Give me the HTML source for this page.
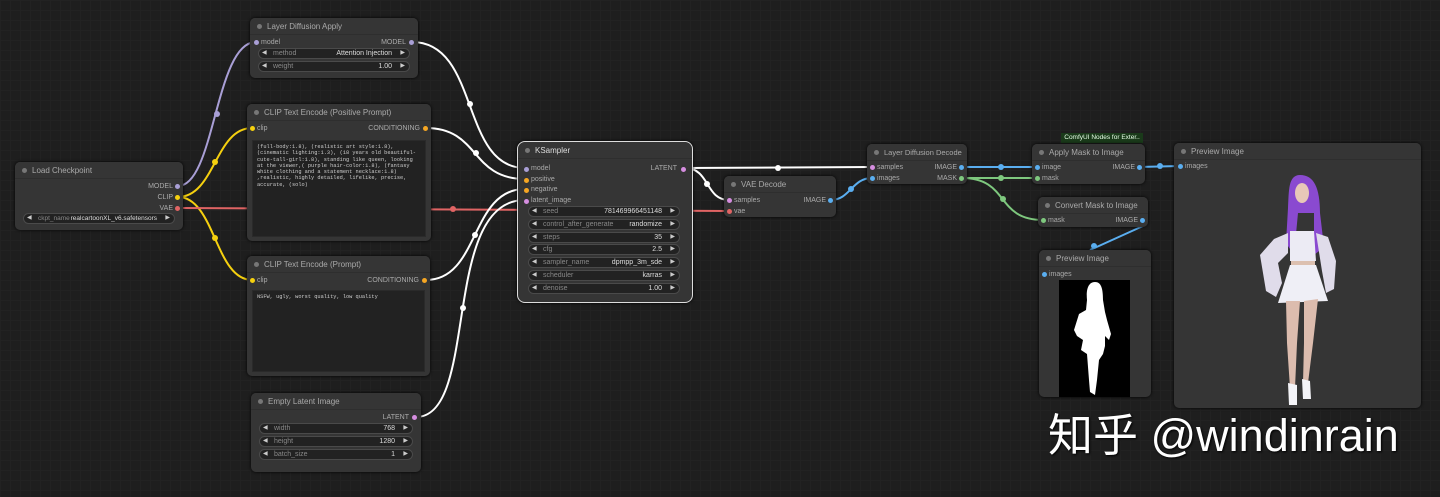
<!DOCTYPE html>
<html><head><meta charset="utf-8"><style>
*{box-sizing:border-box;margin:0;padding:0}
body{width:1440px;height:497px;overflow:hidden;background:#1e1e1e;font-family:"Liberation Sans",Arial,sans-serif;position:relative;
background-image:linear-gradient(#222 1px,transparent 1px),linear-gradient(90deg,#222 1px,transparent 1px);background-size:10px 10px}
.n{position:absolute;background:#353535;border-radius:5px;box-shadow:0 0 3px #000}
.t{position:absolute;left:0;right:0;top:0;height:17px;background:#353535;border-bottom:1px solid #2e2e2e;border-radius:5px 5px 0 0;color:#aaa;font-size:8px;line-height:17px;padding-left:17px}
.t:before{content:"";position:absolute;left:7px;top:6px;width:5px;height:5px;border-radius:50%;background:#777}
.l{position:absolute;font-size:7px;color:#aaa;line-height:9px;white-space:nowrap}
.d{position:absolute;width:5px;height:5px;border-radius:50%}
.w{position:absolute;height:11px;background:#222;border:1px solid #4a4a4a;border-radius:6px;font-size:7px;line-height:9px;color:#888;padding-left:14px;white-space:nowrap;overflow:hidden}
.w:before{content:"◀";position:absolute;left:3px;color:#ccc;font-size:6px}
.w:after{content:"▶";position:absolute;right:4px;color:#ccc;font-size:6px}
.w b{position:absolute;right:17px;top:0;font-weight:normal;color:#ddd}
.ta{position:absolute;background:#222;border:1px solid #2a2a2a;font-family:"Liberation Mono","Noto Sans CJK SC",monospace;font-size:5.3px;line-height:6.3px;color:#ccc;padding:3px 4px}
</style></head><body>
<svg width="1440" height="497" style="position:absolute;left:0;top:0" fill="none" stroke-width="2">
<path d="M178 186 C215 186 215 42 256 42" stroke="#a99fd6"/>
<path d="M178 197 C215 197 215 128 252 128" stroke="#f5d00f"/>
<path d="M178 197 C215 197 215 280 252 280" stroke="#f5d00f"/>
<path d="M178 208 L729 211" stroke="#e06464"/>
<path d="M412 42 C480 42 460 168 525 168" stroke="#fff"/>
<path d="M426 128 C480 128 470 179 525 179" stroke="#fff"/>
<path d="M426 280 C480 280 470 189 525 189" stroke="#fff"/>
<path d="M416 417 C480 417 440 200 525 200" stroke="#fff"/>
<path d="M685 168 C710 168 705 200 729 200" stroke="#fff"/>
<path d="M685 168 L872 167" stroke="#fff"/>
<path d="M831 200 C850 200 852 178 872 178" stroke="#5aaef0"/>
<path d="M962 167 L1038 167" stroke="#5aaef0"/>
<path d="M1140 167 L1180 166" stroke="#5aaef0"/>
<path d="M962 178 L1038 178" stroke="#7ec87e"/>
<path d="M962 178 C1010 178 995 220 1043 220" stroke="#7ec87e"/>
<path d="M1143 226 L1090 250" stroke="#5aaef0"/>
<g stroke="none"><circle cx="217" cy="114" r="3" fill="#a99fd6"/><circle cx="215" cy="162" r="3" fill="#f5d00f"/><circle cx="215" cy="238" r="3" fill="#f5d00f"/><circle cx="453" cy="209" r="3" fill="#e06464"/>
<circle cx="470" cy="104" r="3" fill="#fff"/><circle cx="476" cy="153" r="3" fill="#fff"/><circle cx="475" cy="235" r="3" fill="#fff"/><circle cx="463" cy="308" r="3" fill="#fff"/>
<circle cx="778" cy="168" r="3" fill="#fff"/><circle cx="707" cy="184" r="3" fill="#fff"/><circle cx="851" cy="189" r="3" fill="#5aaef0"/><circle cx="1001" cy="167" r="3" fill="#5aaef0"/><circle cx="1160" cy="166" r="3" fill="#5aaef0"/><circle cx="1001" cy="178" r="3" fill="#7ec87e"/><circle cx="1003" cy="199" r="3" fill="#7ec87e"/><circle cx="1094" cy="246" r="3" fill="#5aaef0"/></g>
</svg>

<div class="n" style="left:250px;top:18px;width:168px;height:60px"><div class="t">Layer Diffusion Apply</div>
<div class="d" style="left:4px;top:22px;background:#a99fd6"></div><div class="l" style="left:11px;top:20px">model</div>
<div class="l" style="right:12px;top:20px">MODEL</div><div class="d" style="right:4px;top:22px;background:#a99fd6"></div>
<div class="w" style="left:8px;right:8px;top:30px">method<b>Attention Injection</b></div>
<div class="w" style="left:8px;right:8px;top:43px">weight<b>1.00</b></div></div>

<div class="n" style="left:247px;top:104px;width:184px;height:137px"><div class="t">CLIP Text Encode (Positive Prompt)</div>
<div class="d" style="left:3px;top:22px;background:#f5d00f"></div><div class="l" style="left:10px;top:20px">clip</div>
<div class="l" style="right:11px;top:20px">CONDITIONING</div><div class="d" style="right:3px;top:22px;background:#f5a623"></div>
<div class="ta" style="left:5px;right:5px;top:36px;height:97px">(full-body:1.8), (realistic art style:1.8), (cinematic lighting:1.3), (18 years old beautiful-cute-tall-girl:1.8), standing like queen, looking at the viewer,( purple hair-color:1.8), (fantasy white clothing and a statement necklace:1.8) ,realistic, highly detailed, lifelike, precise, accurate, (solo)</div></div>

<div class="n" style="left:15px;top:162px;width:168px;height:68px"><div class="t">Load Checkpoint</div>
<div class="l" style="right:10px;top:20px">MODEL</div><div class="d" style="right:3px;top:22px;background:#a99fd6"></div>
<div class="l" style="right:10px;top:31px">CLIP</div><div class="d" style="right:3px;top:33px;background:#f5d00f"></div>
<div class="l" style="right:10px;top:42px">VAE</div><div class="d" style="right:3px;top:44px;background:#e06464"></div>
<div class="w" style="left:8px;right:8px;top:51px;font-size:6.5px">ckpt_name<b>realcartoonXL_v6.safetensors</b></div></div>

<div class="n" style="left:247px;top:256px;width:183px;height:120px"><div class="t">CLIP Text Encode (Prompt)</div>
<div class="d" style="left:3px;top:22px;background:#f5d00f"></div><div class="l" style="left:10px;top:20px">clip</div>
<div class="l" style="right:11px;top:20px">CONDITIONING</div><div class="d" style="right:3px;top:22px;background:#f5a623"></div>
<div class="ta" style="left:5px;right:5px;top:34px;height:82px">NSFW, ugly, worst quality, low quality</div></div>

<div class="n" style="left:251px;top:393px;width:170px;height:79px"><div class="t">Empty Latent Image</div>
<div class="l" style="right:12px;top:20px">LATENT</div><div class="d" style="right:4px;top:22px;background:#d68ee0"></div>
<div class="w" style="left:8px;right:8px;top:30px">width<b>768</b></div>
<div class="w" style="left:8px;right:8px;top:43px">height<b>1280</b></div>
<div class="w" style="left:8px;right:8px;top:56px">batch_size<b>1</b></div></div>

<div class="n" style="left:517px;top:141px;width:176px;height:162px;border:1px solid #ddd;border-radius:8px"><div class="t" style="color:#ddd;border-radius:8px 8px 0 0">KSampler</div>
<div class="d" style="left:6px;top:25px;background:#a99fd6"></div><div class="l" style="left:13px;top:22px">model</div>
<div class="d" style="left:6px;top:36px;background:#f5a623"></div><div class="l" style="left:13px;top:33px">positive</div>
<div class="d" style="left:6px;top:46px;background:#f5a623"></div><div class="l" style="left:13px;top:43px">negative</div>
<div class="d" style="left:6px;top:57px;background:#d68ee0"></div><div class="l" style="left:13px;top:54px">latent_image</div>
<div class="l" style="right:15px;top:22px">LATENT</div><div class="d" style="right:6px;top:25px;background:#d68ee0"></div>
<div class="w" style="left:10px;right:12px;top:64px">seed<b>781469966451148</b></div>
<div class="w" style="left:10px;right:12px;top:77px">control_after_generate<b>randomize</b></div>
<div class="w" style="left:10px;right:12px;top:90px">steps<b>35</b></div>
<div class="w" style="left:10px;right:12px;top:102px">cfg<b>2.5</b></div>
<div class="w" style="left:10px;right:12px;top:115px">sampler_name<b>dpmpp_3m_sde</b></div>
<div class="w" style="left:10px;right:12px;top:128px">scheduler<b>karras</b></div>
<div class="w" style="left:10px;right:12px;top:141px">denoise<b>1.00</b></div></div>

<div class="n" style="left:724px;top:176px;width:112px;height:41px"><div class="t">VAE Decode</div>
<div class="d" style="left:3px;top:22px;background:#d68ee0"></div><div class="l" style="left:10px;top:20px">samples</div>
<div class="d" style="left:3px;top:33px;background:#e06464"></div><div class="l" style="left:10px;top:31px">vae</div>
<div class="l" style="right:10px;top:20px">IMAGE</div><div class="d" style="right:3px;top:22px;background:#5aaef0"></div></div>

<div class="n" style="left:867px;top:144px;width:100px;height:40px"><div class="t" style="font-size:7.5px">Layer Diffusion Decode</div>
<div class="d" style="left:3px;top:21px;background:#d68ee0"></div><div class="l" style="left:10px;top:19px">samples</div>
<div class="d" style="left:3px;top:32px;background:#5aaef0"></div><div class="l" style="left:10px;top:30px">images</div>
<div class="l" style="right:10px;top:19px">IMAGE</div><div class="d" style="right:3px;top:21px;background:#5aaef0"></div>
<div class="l" style="right:10px;top:30px">MASK</div><div class="d" style="right:3px;top:32px;background:#7ec87e"></div></div>

<div style="position:absolute;left:1061px;top:133px;width:82px;height:10px;background:#1a3a1a;color:#e8ffe8;font-size:6.5px;line-height:10px;text-align:center">ComfyUI Nodes for Exter..</div>
<div class="n" style="left:1032px;top:144px;width:113px;height:40px"><div class="t">Apply Mask to Image</div>
<div class="d" style="left:3px;top:21px;background:#5aaef0"></div><div class="l" style="left:10px;top:19px">image</div>
<div class="d" style="left:3px;top:32px;background:#7ec87e"></div><div class="l" style="left:10px;top:30px">mask</div>
<div class="l" style="right:10px;top:19px">IMAGE</div><div class="d" style="right:3px;top:21px;background:#5aaef0"></div></div>

<div class="n" style="left:1038px;top:197px;width:110px;height:30px"><div class="t">Convert Mask to Image</div>
<div class="d" style="left:3px;top:21px;background:#7ec87e"></div><div class="l" style="left:10px;top:19px">mask</div>
<div class="l" style="right:10px;top:19px">IMAGE</div><div class="d" style="right:3px;top:21px;background:#5aaef0"></div></div>

<div class="n" style="left:1039px;top:250px;width:112px;height:147px"><div class="t">Preview Image</div>
<div class="d" style="left:3px;top:22px;background:#5aaef0"></div><div class="l" style="left:10px;top:20px">images</div>
<div style="position:absolute;left:20px;top:30px;width:71px;height:117px;background:#000"></div>
<svg style="position:absolute;left:20px;top:30px" width="71" height="117" viewBox="0 0 71 117"><path fill="#fff" d="M36 2 C29 2 27 10 28 20 L27 30 L20 34 L15 50 L18 56 L24 60 L22 70 L28 74 L30 100 L31 112 L36 115 L38 100 L40 80 L44 74 L46 66 L46 56 L50 60 L52 54 L48 40 L46 32 L44 20 C44 8 42 2 36 2Z"/></svg></div>

<div class="n" style="left:1174px;top:143px;width:247px;height:265px"><div class="t">Preview Image</div>
<div class="d" style="left:4px;top:21px;background:#5aaef0"></div><div class="l" style="left:11px;top:19px">images</div>
<svg style="position:absolute;left:0;top:0" width="247" height="265">
<path fill="#8a4ad0" d="M126 32 C114 32 115 48 114 65 L112 100 L120 112 L124 70 L140 70 L140 112 L150 104 L146 70 C146 45 140 32 126 32Z"/>
<ellipse cx="128" cy="50" rx="7" ry="10" fill="#e8c8b8"/>
<path fill="#e0dcea" d="M114 90 L100 96 L86 112 L92 148 L102 154 L108 140 L104 120 L114 110 Z M142 90 L154 94 L162 118 L160 146 L152 150 L148 128 Z"/>
<path fill="#ecebf4" d="M116 88 L140 88 L142 118 L116 118 Z"/>
<path fill="#dcc0b0" d="M117 118 L141 118 L141 124 L117 124Z"/>
<path fill="#efeff6" d="M116 122 L142 122 L154 158 L104 160 Z"/>
<path fill="#dcbcae" d="M112 158 L126 158 L123 200 L121 245 L116 245 L113 200 Z M130 158 L144 156 L139 200 L134 240 L129 240 L130 200 Z"/>
<path fill="#f4f4f8" d="M114 240 L123 242 L123 262 L115 262 Z M128 236 L136 238 L137 256 L129 256Z"/>
</svg></div>

<div style="position:absolute;left:1048px;top:406px;font-family:'Liberation Sans','Noto Sans CJK SC',sans-serif;font-size:45px;line-height:60px;color:#fff;text-shadow:1px 1px 2px #000;white-space:nowrap">知乎 @windinrain</div>
</body></html>
